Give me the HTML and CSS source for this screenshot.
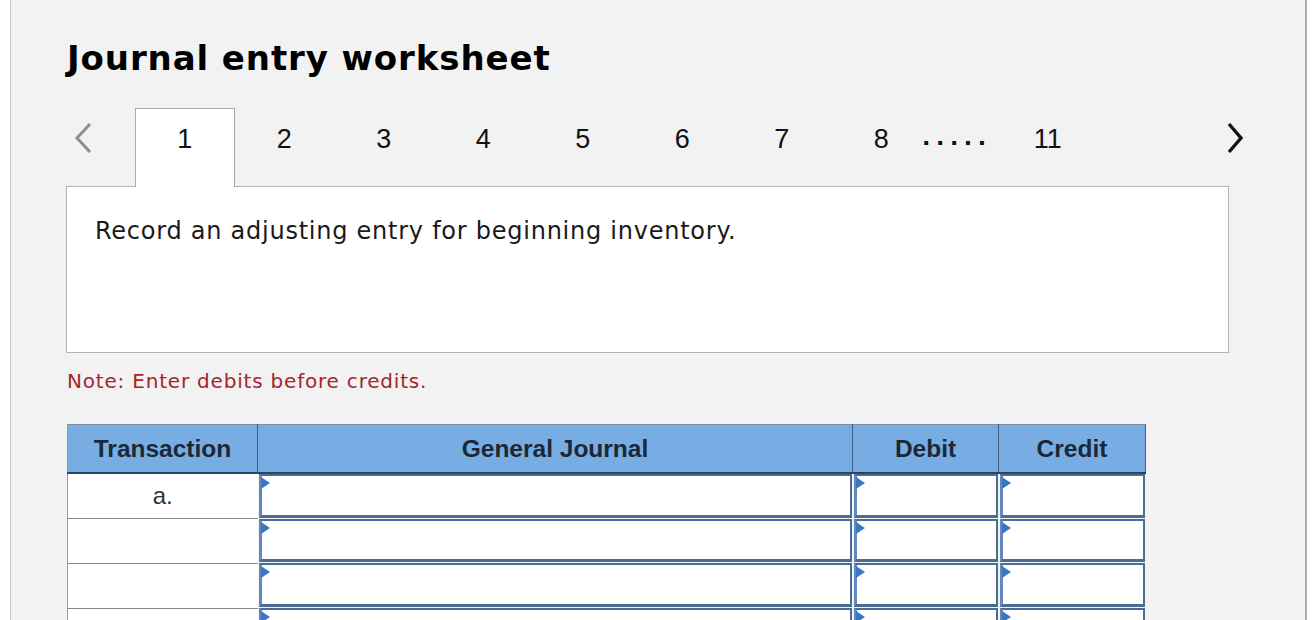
FILE: index.html
```html
<!DOCTYPE html>
<html>
<head>
<meta charset="utf-8">
<link rel="stylesheet" href="styles.css">
</head>
<body>
<div class="page">
  <h1 class="title">Journal entry worksheet</h1>
  <div class="tabs">
    <div class="nav nav-prev">
      <svg width="22" height="32" viewBox="0 0 22 32"><polyline points="18,2 5,16 18,30" fill="none" stroke="#8f8f8f" stroke-width="3"/></svg>
    </div>
    <div class="tab active">1</div>
    <div class="tab">2</div>
    <div class="tab">3</div>
    <div class="tab">4</div>
    <div class="tab">5</div>
    <div class="tab">6</div>
    <div class="tab">7</div>
    <div class="tab">8</div>
    <div class="dots">.....</div>
    <div class="tab">11</div>
    <div class="spacer"></div>
    <div class="nav nav-next">
      <svg width="20" height="32" viewBox="0 0 20 32"><polyline points="2,2 14,16 2,30" fill="none" stroke="#111" stroke-width="3.4"/></svg>
    </div>
  </div>
  <div class="prompt">
    <p>Record an adjusting entry for beginning inventory.</p>
  </div>
  <p class="note">Note: Enter debits before credits.</p>
  <table class="journal">
    <colgroup>
      <col class="c-tr"><col class="c-gj"><col class="c-dr"><col class="c-cr">
    </colgroup>
    <thead>
      <tr><th>Transaction</th><th>General Journal</th><th>Debit</th><th>Credit</th></tr>
    </thead>
    <tbody>
      <tr><td class="tr">a.</td><td class="in"><div class="box"></div></td><td class="in"><div class="box"></div></td><td class="in"><div class="box"></div></td></tr>
      <tr><td class="tr"></td><td class="in"><div class="box"></div></td><td class="in"><div class="box"></div></td><td class="in"><div class="box"></div></td></tr>
      <tr><td class="tr"></td><td class="in"><div class="box"></div></td><td class="in"><div class="box"></div></td><td class="in"><div class="box"></div></td></tr>
      <tr><td class="tr"></td><td class="in"><div class="box"></div></td><td class="in"><div class="box"></div></td><td class="in"><div class="box"></div></td></tr>
      <tr><td class="tr"></td><td class="in"><div class="box"></div></td><td class="in"><div class="box"></div></td><td class="in"><div class="box"></div></td></tr>
    </tbody>
  </table>
</div>
</body>
</html>
```
FILE: styles.css
```css
html, body {
  margin: 0;
  padding: 0;
  background: #ffffff;
  overflow: hidden;
}
.page {
  margin-left: 10px;
  width: 1297px;
  min-height: 800px;
  background: #f2f2f2;
  border-left: 1px solid #c8c8c8;
  border-right: 2px solid #a9a9a9;
  padding: 38px 0 0 56px;
  box-sizing: border-box;
  font-family: "DejaVu Sans", Verdana, sans-serif;
}
.title {
  margin: 0;
  font-size: 34px;
  line-height: 40px;
  letter-spacing: 0.9px;
  font-weight: bold;
  color: #000;
}
.tabs {
  display: flex;
  align-items: flex-start;
  margin-top: 30px;
  width: 1190px;
  position: relative;
  z-index: 1;
  margin-bottom: -1px;
  font-family: "Liberation Sans", Arial, sans-serif;
}
.nav {
  height: 79px;
  padding-top: 14px;
  box-sizing: border-box;
}
.nav-prev {
  width: 68px;
  padding-left: 5px;
}
.nav-next {
  width: 30px;
  padding-top: 14px;
}
.tab {
  width: 99.5px;
  height: 79px;
  box-sizing: border-box;
  padding-top: 15px;
  text-align: center;
  font-size: 27px;
  line-height: 30px;
  color: #111;
  border: 1px solid transparent;
  border-bottom: none;
}
.tab.active {
  background: #fff;
  border-color: #a8a8a8;
}
.dots {
  width: 76px;
  margin-left: -9px;
  padding-top: 15px;
  font-family: "DejaVu Sans", Verdana, sans-serif;
  font-weight: bold;
  font-size: 22px;
  line-height: 30px;
  letter-spacing: 5.6px;
  color: #111;
}
.spacer {
  flex: 1;
}
.prompt {
  width: 1163px;
  height: 167px;
  margin-left: -1px;
  box-sizing: border-box;
  background: #fff;
  border: 1px solid #b4b4b4;
  padding: 29px 0 0 28px;
}
.prompt p {
  margin: 0;
  font-size: 24px;
  line-height: 30px;
  letter-spacing: 0.75px;
  color: #1a1a1a;
}
.note {
  margin: 16px 0 0 0;
  font-size: 20px;
  line-height: 24px;
  letter-spacing: 0.8px;
  color: #a3272b;
}
.journal {
  margin-top: 31px;
  border-collapse: collapse;
  table-layout: fixed;
  width: 1078px;
  font-family: "Liberation Sans", Arial, sans-serif;
}
.c-tr { width: 190px; }
.c-gj { width: 595px; }
.c-dr { width: 146px; }
.c-cr { width: 147px; }
.journal th {
  background: #78ade4;
  height: 47px;
  padding: 0;
  font-size: 24.5px;
  font-weight: bold;
  color: #1b2838;
  border: 1px solid #3f5f82;
  border-top-color: #7d8fa3;
  border-bottom: 2px solid #2a4563;
  text-align: center;
}
.journal th:first-child {
  border-left-color: #8a9aab;
}
.journal td {
  padding: 0;
  height: 44.7px;
  box-sizing: border-box;
}
.journal td.tr {
  background: #fff;
  text-align: center;
  vertical-align: top;
  padding-top: 8px;
  font-size: 24px;
  line-height: 28px;
  color: #333;
  border-left: 1px solid #9a9a9a;
  border-bottom: 1px solid #8a8a8a;
}
.journal td.in {
  padding: 0 1px 1px 1px;
  vertical-align: top;
}
.box {
  position: relative;
  height: 43.7px;
  box-sizing: border-box;
  background: #fff;
  border-top: 2px solid #4d6c93;
  border-bottom: 3px solid #4d6c93;
  border-right: 2px solid #4d6c93;
  border-left: 3px solid #6189bd;
}
.box::before {
  content: "";
  position: absolute;
  left: -1px;
  top: 1px;
  width: 0;
  height: 0;
  border-top: 6px solid transparent;
  border-bottom: 6px solid transparent;
  border-left: 9px solid #3a77c2;
}
```
